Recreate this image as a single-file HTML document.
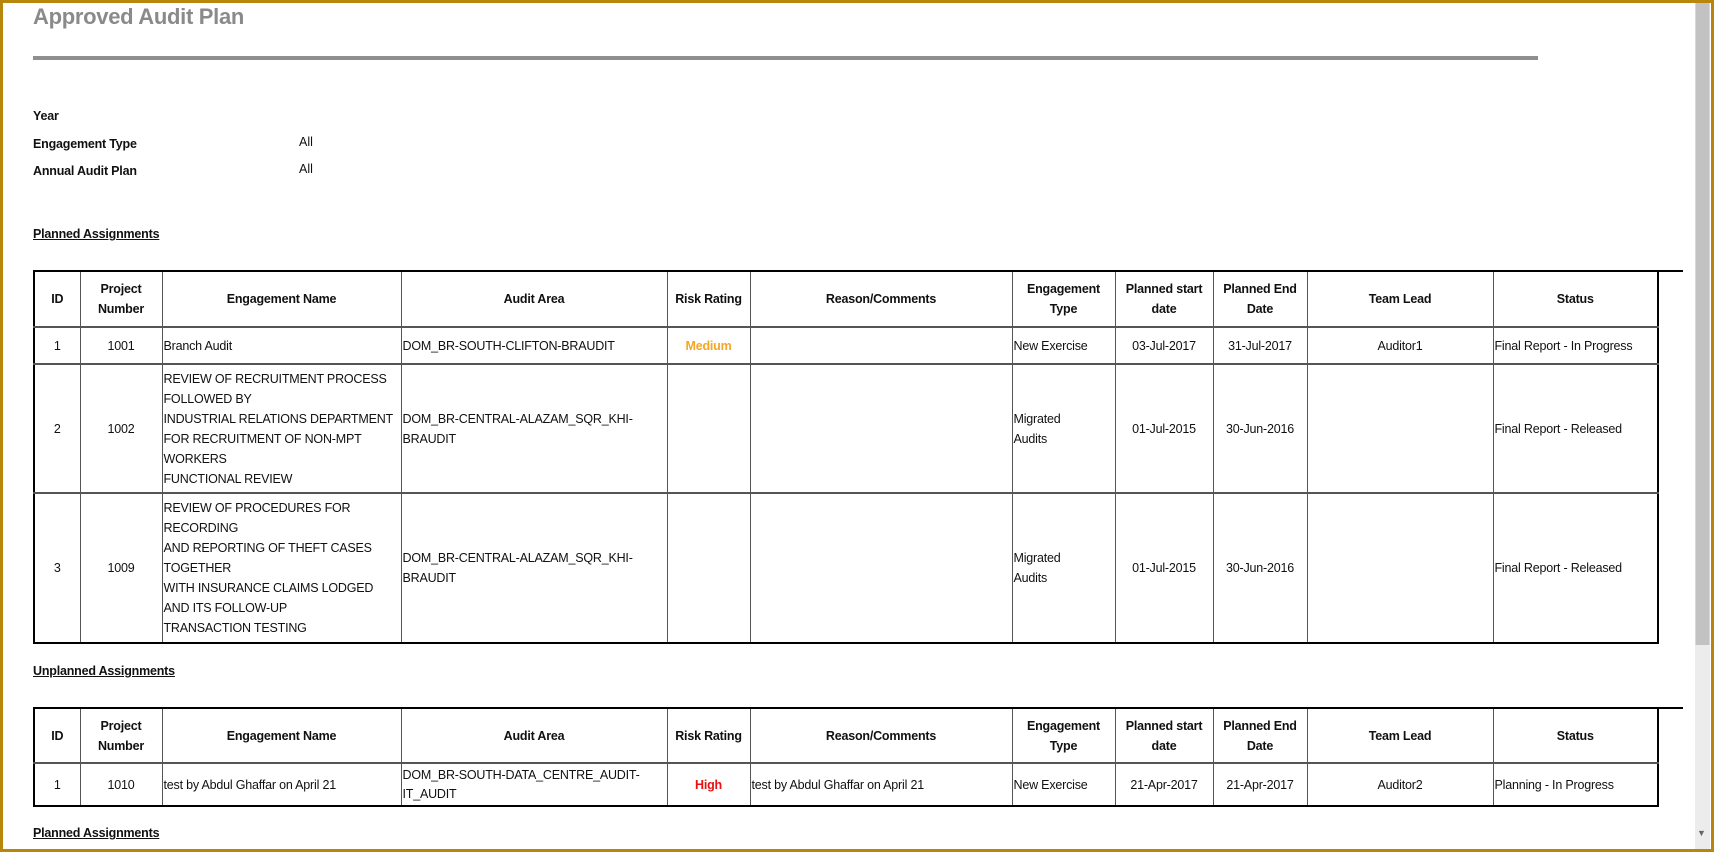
<!DOCTYPE html>
<html><head><meta charset="utf-8"><style>
*{margin:0;padding:0;box-sizing:border-box}
body{width:1714px;height:852px;position:relative;overflow:hidden;background:#fff;font-family:"Liberation Sans",sans-serif;color:#111}
.frame{position:absolute;left:0;top:0;width:1714px;height:852px;border:3px solid #b8860b;border-bottom:3px solid #b8860b}
.title{position:absolute;left:33px;top:4px;font-size:22px;font-weight:bold;color:#8a8a8a;letter-spacing:-0.3px}
.rule{position:absolute;left:33px;top:56px;width:1505px;height:4px;background:#8f8f8f}
.lbl{position:absolute;left:33px;font-size:12.5px;font-weight:bold;letter-spacing:-0.2px}
.val{position:absolute;left:299px;font-size:12.5px}
.sec{position:absolute;left:33px;font-size:12.5px;font-weight:bold;text-decoration:underline;letter-spacing:-0.2px}
table{position:absolute;left:33px;border-collapse:collapse;table-layout:fixed;width:1624px;border:2px solid #000;font-size:12.5px;letter-spacing:-0.2px}
td,th{border:1px solid #555;vertical-align:middle;line-height:20px;padding:0 1px;overflow:hidden}
th{font-weight:bold;text-align:center;line-height:20px}
tr.b td{border-top:2px solid #555}
.c{text-align:center}
.l{text-align:left}
.ext{position:absolute;height:2px;background:#000}
.sb{position:absolute;left:1695px;top:3px;width:15px;height:846px;background:#ececec}
.th{position:absolute;left:1695px;top:3px;width:15px;height:642px;background:#c2c2c2;border-left:1px solid #d8d8d8;border-right:1px solid #d8d8d8}
</style></head><body>
<div class="frame"></div>
<div class="title">Approved Audit Plan</div>
<div class="rule"></div>
<div class="lbl" style="top:109px">Year</div>
<div class="lbl" style="top:137px">Engagement Type</div>
<div class="val" style="top:135px">All</div>
<div class="lbl" style="top:164px">Annual Audit Plan</div>
<div class="val" style="top:162px">All</div>
<div class="sec" style="top:227px">Planned Assignments</div>

<div class="ext" style="left:33px;top:270px;width:1650px"></div>
<table style="top:270px">
<colgroup><col style="width:46px"><col style="width:82px"><col style="width:239px"><col style="width:266px"><col style="width:83px"><col style="width:262px"><col style="width:103px"><col style="width:98px"><col style="width:94px"><col style="width:186px"><col style="width:165px"></colgroup>
<tr style="height:56px"><th>ID</th><th>Project Number</th><th>Engagement Name</th><th>Audit Area</th><th>Risk Rating</th><th>Reason/Comments</th><th>Engagement Type</th><th>Planned start date</th><th>Planned End Date</th><th>Team Lead</th><th>Status</th></tr>
<tr class="b" style="height:37px"><td class="c">1</td><td class="c">1001</td><td class="l">Branch Audit</td><td class="l">DOM_BR-SOUTH-CLIFTON-BRAUDIT</td><td class="c" style="color:#f5a623;font-weight:bold">Medium</td><td></td><td class="l">New Exercise</td><td class="c">03-Jul-2017</td><td class="c">31-Jul-2017</td><td class="c">Auditor1</td><td class="l">Final Report - In Progress</td></tr>
<tr class="b" style="height:129px"><td class="c">2</td><td class="c">1002</td><td class="l">REVIEW OF RECRUITMENT PROCESS<br>FOLLOWED BY<br>INDUSTRIAL RELATIONS DEPARTMENT<br>FOR RECRUITMENT OF NON-MPT<br>WORKERS<br>FUNCTIONAL REVIEW</td><td class="l">DOM_BR-CENTRAL-ALAZAM_SQR_KHI-<br>BRAUDIT</td><td></td><td></td><td class="l">Migrated<br>Audits</td><td class="c">01-Jul-2015</td><td class="c">30-Jun-2016</td><td></td><td class="l">Final Report - Released</td></tr>
<tr class="b" style="height:150px"><td class="c">3</td><td class="c">1009</td><td class="l">REVIEW OF PROCEDURES FOR<br>RECORDING<br>AND REPORTING OF THEFT CASES<br>TOGETHER<br>WITH INSURANCE CLAIMS LODGED<br>AND ITS FOLLOW-UP<br>TRANSACTION TESTING</td><td class="l">DOM_BR-CENTRAL-ALAZAM_SQR_KHI-<br>BRAUDIT</td><td></td><td></td><td class="l">Migrated<br>Audits</td><td class="c">01-Jul-2015</td><td class="c">30-Jun-2016</td><td></td><td class="l">Final Report - Released</td></tr>
</table>

<div class="sec" style="top:664px">Unplanned Assignments</div>

<div class="ext" style="left:33px;top:707px;width:1650px"></div>
<table style="top:707px">
<colgroup><col style="width:46px"><col style="width:82px"><col style="width:239px"><col style="width:266px"><col style="width:83px"><col style="width:262px"><col style="width:103px"><col style="width:98px"><col style="width:94px"><col style="width:186px"><col style="width:165px"></colgroup>
<tr style="height:55px"><th>ID</th><th>Project Number</th><th>Engagement Name</th><th>Audit Area</th><th>Risk Rating</th><th>Reason/Comments</th><th>Engagement Type</th><th>Planned start date</th><th>Planned End Date</th><th>Team Lead</th><th>Status</th></tr>
<tr class="b" style="height:43px"><td class="c">1</td><td class="c">1010</td><td class="l">test by Abdul Ghaffar on April 21</td><td class="l" style="line-height:19px">DOM_BR-SOUTH-DATA_CENTRE_AUDIT-<br>IT_AUDIT</td><td class="c" style="color:#e81010;font-weight:bold">High</td><td class="l">test by Abdul Ghaffar on April 21</td><td class="l">New Exercise</td><td class="c">21-Apr-2017</td><td class="c">21-Apr-2017</td><td class="c">Auditor2</td><td class="l">Planning - In Progress</td></tr>
</table>

<div class="sec" style="top:826px">Planned Assignments</div>

<div class="sb"></div>
<div class="th"></div>
<div style="position:absolute;left:1697px;top:828px;font-size:9px;color:#666">▼</div>
</body></html>
